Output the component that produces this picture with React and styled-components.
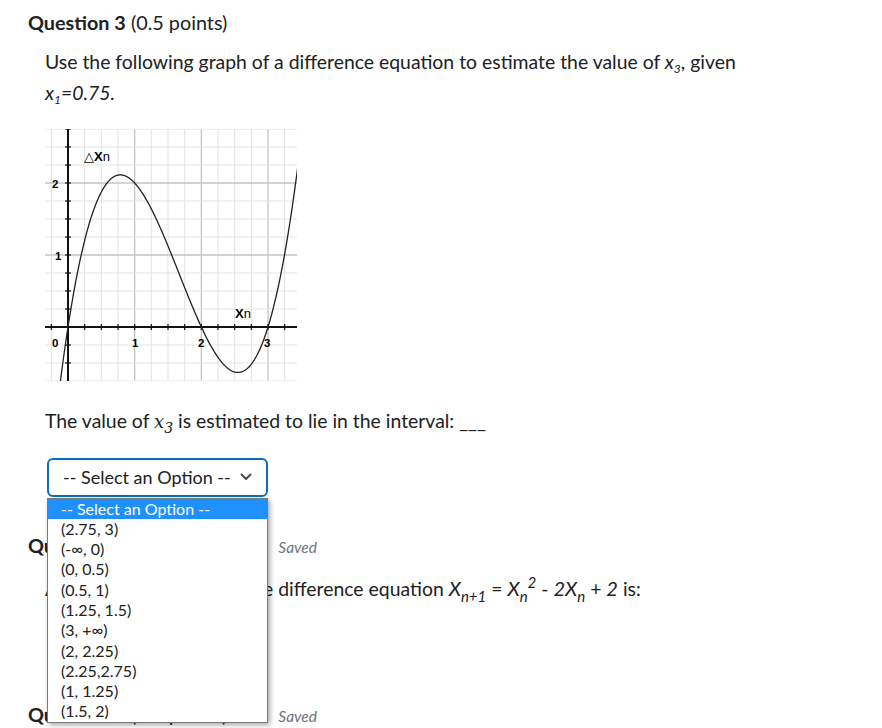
import React from "react";
import styled, { createGlobalStyle } from "styled-components";

const Global = createGlobalStyle`
  html, body { margin: 0; padding: 0; background: #fff; }
  body { font-family: Lato, "Open Sans", sans-serif; color: #202122; }
`;

const Page = styled.div`
  padding: 10px 0 0 28px;
  width: 854px;
  height: 718px;
  overflow: hidden;
`;

const QuestionBlock = styled.section`
  display: flex;
  flex-direction: column;
  margin-top: ${(p) => p.$mt || 0}px;
`;

const Header = styled.h2`
  margin: 0;
  font-size: 19.8px;
  line-height: 24px;
  font-weight: 400;
  display: flex;
  align-items: baseline;
  color: #202122;
  b { font-weight: 700; }
`;

const Saved = styled.span`
  margin-left: 51px;
  font-size: 15.5px;
  font-style: italic;
  color: #6e7376;
`;

const Body = styled.div`
  padding-left: 17px;
  display: flex;
  flex-direction: column;
  align-items: flex-start;
`;

const Prompt = styled.p`
  margin: ${(p) => p.$mt || 0}px 0 0 0;
  font-size: 19.4px;
  line-height: 31px;
  color: #202122;
  white-space: nowrap;
  sub { font-size: 12px; vertical-align: -4px; line-height: 0; }
  sup { font-size: 14px; vertical-align: 8px; line-height: 0; }
`;

const MathSub = styled.span`
  font-style: italic;
  font-family: "DejaVu Serif", serif;
  font-size: 18px;
  sub { font-size: 14px; vertical-align: -5px; }
`;

const Eq = styled.i`
  font-size: 20px;
  sub { font-size: 15px; vertical-align: -6px; line-height: 0; }
  sup { font-size: 15px; vertical-align: 8px; line-height: 0; }
`;

const GraphWrap = styled.div`
  margin-top: 21px;
  width: 252px;
  height: 252px;
`;

const SelectWrap = styled.div`
  position: relative;
  margin-top: ${(p) => p.$mt || 0}px;
  margin-left: 2px;
  width: 221px;
`;

const SelectBox = styled.div`
  box-sizing: border-box;
  width: 221px;
  height: 39px;
  border: 2px solid ${(p) => (p.$focus ? "#0a6fc2" : "#cdd5dc")};
  border-radius: 6px;
  display: flex;
  align-items: center;
  justify-content: space-between;
  padding: 0 14px 0 14px;
  font-size: 18px;
  color: #202122;
  background: #fff;
`;

const OptionList = styled.ul`
  position: absolute;
  top: 40px;
  left: 0;
  z-index: 5;
  box-sizing: border-box;
  width: 221px;
  margin: 0;
  padding: 0;
  list-style: none;
  background: #fff;
  border: 1px solid #7a7a7a;
  box-shadow: 2px 2px 5px rgba(0, 0, 0, 0.35);
`;

const Option = styled.li`
  height: 20.3px;
  line-height: 20.3px;
  padding-left: 13px;
  font-size: 16px;
  background: ${(p) => (p.$active ? "#1e90ff" : "#fff")};
  color: ${(p) => (p.$active ? "#fff" : "#202122")};
  white-space: nowrap;
`;

const Chevron = () => (
  <svg width="12" height="8" viewBox="0 0 12 8">
    <path d="M1.5 1.5 L6 6 L10.5 1.5" fill="none" stroke="#494c4e" strokeWidth="2" strokeLinecap="round" strokeLinejoin="round" />
  </svg>
);

const Graph = () => {
  const ox = 23, oy = 198, ux = 66.67, uy = 72;
  const f = (x) => x * (x - 2) * (x - 3);
  const vlines = [];
  for (let k = -1; k <= 14; k++) {
    const x = ox + (k * ux) / 4;
    if (k === 0) continue;
    vlines.push(
      <line key={"v" + k} x1={x} y1={0} x2={x} y2={252} stroke={k % 4 === 0 ? "#c4c4c4" : "#e3e3e3"} strokeWidth={k % 4 === 0 ? 1.3 : 1} />
    );
  }
  const hlines = [];
  for (let k = -3; k <= 11; k++) {
    const y = oy - (k * uy) / 4;
    if (k === 0) continue;
    hlines.push(
      <line key={"h" + k} x1={0} y1={y} x2={252} y2={y} stroke={k % 4 === 0 ? "#c4c4c4" : "#e3e3e3"} strokeWidth={k % 4 === 0 ? 1.3 : 1} />
    );
  }
  const yticks = [];
  for (let k = -2; k <= 11; k++) {
    if (k === 0) continue;
    const y = oy - (k * uy) / 4;
    yticks.push(<line key={"yt" + k} x1={ox - 3} y1={y} x2={ox + 3} y2={y} stroke="#111" strokeWidth="1.2" />);
  }
  const xticks = [];
  for (let k = -1; k <= 14; k++) {
    if (k === 0) continue;
    const x = ox + (k * ux) / 4;
    xticks.push(<line key={"xt" + k} x1={x} y1={oy - 3} x2={x} y2={oy + 3} stroke="#111" strokeWidth="1.2" />);
  }
  let d = "";
  for (let t = -0.2; t <= 3.6; t += 0.01) {
    const px = ox + t * ux;
    const py = oy - f(t) * uy;
    d += (d ? " L" : "M") + px.toFixed(2) + " " + py.toFixed(2);
  }
  const lab = { fontFamily: "'Liberation Sans', Arial, sans-serif", fontSize: 11.5, fill: "#000", fontWeight: 600 };
  const big = { fontFamily: "'Liberation Sans', Arial, sans-serif", fontSize: 13, fill: "#000" };
  return (
    <svg width="252" height="252" viewBox="0 0 252 252">
      <rect width="252" height="252" fill="#fff" />
      {vlines}
      {hlines}
      <line x1={ox} y1={0} x2={ox} y2={252} stroke="#111" strokeWidth="2" />
      <line x1={0} y1={oy} x2={252} y2={oy} stroke="#111" strokeWidth="2" />
      {yticks}
      {xticks}
      <path d={d} fill="none" stroke="#222" strokeWidth="1.3" />
      <text x="7" y="218" style={lab}>0</text>
      <text x="7" y="59" style={lab}>2</text>
      <text x="10" y="131" style={lab}>1</text>
      <text x="87" y="218" style={lab}>1</text>
      <text x="153" y="218" style={lab}>2</text>
      <text x="219" y="218" style={lab}>3</text>
      <text x="39" y="32" style={big}>
        <tspan style={{ fontFamily: "'DejaVu Sans', sans-serif", fontSize: 13 }}>△</tspan>
        <tspan fontWeight="700">X</tspan>
        <tspan>n</tspan>
      </text>
      <text x="190" y="189" style={big}>
        <tspan fontWeight="700">X</tspan>
        <tspan>n</tspan>
      </text>
    </svg>
  );
};

const options = [
  "-- Select an Option --",
  "(2.75, 3)",
  "(-∞, 0)",
  "(0, 0.5)",
  "(0.5, 1)",
  "(1.25, 1.5)",
  "(3, +∞)",
  "(2, 2.25)",
  "(2.25,2.75)",
  "(1, 1.25)",
  "(1.5, 2)",
];

export default function App() {
  return (
    <>
      <Global />
      <Page>
        <QuestionBlock>
          <Header>
            <b>Question 3</b>&nbsp;(0.5 points)
          </Header>
          <Body>
            <Prompt $mt={12}>
              Use the following graph of a difference equation to estimate the value of <i>x<sub>3</sub></i>, given
              <br />
              <i>x<sub>1</sub>=0.75.</i>
            </Prompt>
            <GraphWrap>
              <Graph />
            </GraphWrap>
            <Prompt $mt={23.5}>
              The value of <MathSub>x<sub>3</sub></MathSub> is estimated to lie in the interval: ___
            </Prompt>
            <SelectWrap $mt={21}>
              <SelectBox $focus>
                <span>-- Select an Option --</span>
                <Chevron />
              </SelectBox>
              <OptionList>
                {options.map((o, i) => (
                  <Option key={o} $active={i === 0}>
                    {o}
                  </Option>
                ))}
              </OptionList>
            </SelectWrap>
          </Body>
        </QuestionBlock>

        <QuestionBlock $mt={36}>
          <Header>
            <b>Question 4</b>&nbsp;(0.5 points)
            <Saved>Saved</Saved>
          </Header>
          <Body>
            <Prompt $mt={14.5}>
              An equilibrium point of the difference equation <Eq>X<sub>n+1</sub></Eq> = <Eq>X<sub>n</sub><sup>2</sup></Eq> - <Eq>2X<sub>n</sub></Eq> + <Eq>2</Eq> is:
            </Prompt>
            <SelectWrap $mt={22.5}>
              <SelectBox>
                <span>-- Select an Option --</span>
                <Chevron />
              </SelectBox>
            </SelectWrap>
          </Body>
        </QuestionBlock>

        <QuestionBlock $mt={36}>
          <Header>
            <b>Question 5</b>&nbsp;(0.5 points)
            <Saved>Saved</Saved>
          </Header>
        </QuestionBlock>
      </Page>
    </>
  );
}
